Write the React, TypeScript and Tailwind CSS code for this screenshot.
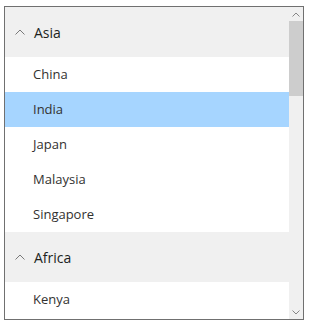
type Group = { name: string; items: string[] };

const groups: Group[] = [
  { name: "Asia", items: ["China", "India", "Japan", "Malaysia", "Singapore"] },
  { name: "Africa", items: ["Kenya"] },
];

const selected = "India";

function ScrollArrow({ up }: { up?: boolean }) {
  return (
    <div className="flex h-[14px] items-center justify-center">
      <svg width="8" height="5" viewBox="0 0 8 5" className="text-[#868686]">
        <path
          d={up ? "M0.5 4.5 L4 1 L7.5 4.5" : "M0.5 0.5 L4 4 L7.5 0.5"}
          fill="none"
          stroke="currentColor"
          strokeWidth="1"
        />
      </svg>
    </div>
  );
}

export default function App() {
  return (
    <div className="pl-[4px] pt-[6px]" style={{ fontFamily: '"Open Sans", "Noto Sans", sans-serif' }}>
      <div className="flex h-[314px] w-[300px] border border-[#707070] bg-white">
        {/* List */}
        <div className="flex-1 overflow-hidden">
          {groups.map((g) => (
            <div key={g.name}>
              <div className="flex h-[50px] items-center bg-[#f0f0f0] pl-[10px] text-[14px] font-medium text-[#201f1e]">
                <svg width="10" height="6" viewBox="0 0 10 6" className="mr-[9px] text-[#6b6b6b]">
                  <path d="M0.5 5.5 L5 1 L9.5 5.5" fill="none" stroke="currentColor" strokeWidth="0.9" />
                </svg>
                {g.name}
              </div>
              {g.items.map((item) => (
                <div
                  key={item}
                  className={`flex h-[35px] items-center pl-[28px] text-[13px] text-[#323130] ${
                    item === selected ? "bg-[#a6d5ff]" : "bg-white"
                  }`}
                >
                  {item}
                </div>
              ))}
            </div>
          ))}
        </div>

        {/* Scrollbar */}
        <div className="flex w-[14px] flex-col bg-[#f0f0f0]">
          <ScrollArrow up />
          <div className="flex-1">
            <div className="h-[75px] bg-[#cdcdcd]" />
          </div>
          <ScrollArrow />
        </div>
      </div>
    </div>
  );
}
